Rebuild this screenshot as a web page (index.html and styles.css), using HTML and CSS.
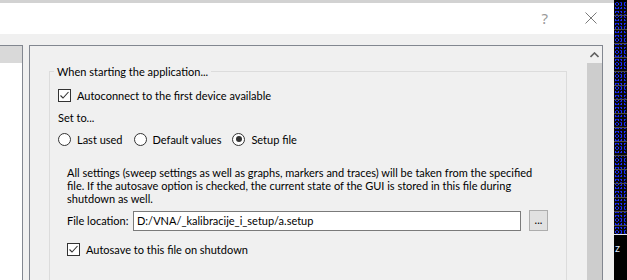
FILE: index.html
```html
<!DOCTYPE html>
<html lang="en">
<head>
    <meta charset="UTF-8">
    <title>Preferences</title>
    <link rel="stylesheet" href="styles.css">
</head>
<body>
    <div class="screen">
        <div class="dialog">
            <div class="titlebar">
                <span class="help">?</span>
                <svg class="close" width="12" height="12" viewBox="0 0 12 12">
                    <path d="M0.5 0.5 L11.5 11.5 M11.5 0.5 L0.5 11.5" stroke="#7a7a7a" stroke-width="1" fill="none"/>
                </svg>
            </div>
            <div class="body">
                <div class="pagelist">
                    <div class="page-item selected"></div>
                </div>
                <div class="scrollarea">
                    <div class="content">
                        <fieldset class="group">
                            <legend>When starting the application...</legend>
                            <label class="row">
                                <span class="check checked">
                                    <svg width="11" height="11" viewBox="0 0 11 11"><path d="M1.5 5.5 L4 8 L9.5 2" stroke="#333" stroke-width="1.1" fill="none"/></svg>
                                </span>
                                Autoconnect to the first device available
                            </label>
                            <div class="row">Set to...</div>
                            <div class="row radios">
                                <label class="radio-opt"><span class="radio"></span>Last used</label>
                                <label class="radio-opt"><span class="radio"></span>Default values</label>
                                <label class="radio-opt"><span class="radio on"></span>Setup file</label>
                            </div>
                            <div class="setup-file">
                                <p class="note">All settings (sweep settings as well as graphs, markers and traces) will be taken from the specified<br>file. If the autosave option is checked, the current state of the GUI is stored in this file during<br>shutdown as well.</p>
                                <div class="file-row">
                                    <span class="file-label">File location:</span>
                                    <span class="file-input">D:/VNA/_kalibracije_i_setup/a.setup</span>
                                    <span class="browse">...</span>
                                </div>
                                <label class="row">
                                    <span class="check checked">
                                        <svg width="11" height="11" viewBox="0 0 11 11"><path d="M1.5 5.5 L4 8 L9.5 2" stroke="#333" stroke-width="1.1" fill="none"/></svg>
                                    </span>
                                    Autosave to this file on shutdown
                                </label>
                            </div>
                        </fieldset>
                    </div>
                    <div class="scrollbar">
                        <div class="arrow">
                            <svg width="9" height="6" viewBox="0 0 9 6"><path d="M0.5 5 L4.5 1 L8.5 5" stroke="#606060" stroke-width="1.6" fill="none"/></svg>
                        </div>
                        <div class="thumb"></div>
                    </div>
                </div>
            </div>
        </div>
        <div class="backdrop">
            <div class="plot"></div>
            <div class="axis">z</div>
        </div>
    </div>
</body>
</html>
```

FILE: styles.css
```css
html, body {
    margin: 0;
    height: 100%;
    overflow: hidden;
}

body {
    font-family: Lato, "Noto Sans", sans-serif;
    font-size: 11px;
    color: #000;
    background: #000;
}

.screen {
    display: flex;
    height: 280px;
}

.dialog {
    width: 614px;
    flex-shrink: 0;
    background: #f0f0f0;
    border-top: 3px solid #d2d2d2;
    display: flex;
    flex-direction: column;
}

.titlebar {
    height: 31px;
    background: #fff;
    display: flex;
    align-items: center;
    justify-content: flex-end;
    padding-right: 17px;
}

.help {
    font-family: "Noto Sans", sans-serif;
    font-size: 15px;
    color: #9a9a9a;
    margin-right: 37px;
    margin-top: -2px;
}

.close {
    margin-top: -1px;
}

.body {
    flex: 1;
    display: flex;
    padding-top: 11px;
    padding-right: 11px;
    min-height: 0;
}

.pagelist {
    width: 22px;
    background: #fff;
    border-top: 1px solid #828790;
    border-right: 1px solid #828790;
}

.page-item {
    height: 17px;
}

.page-item.selected {
    background: #d9d9d9;
}

.scrollarea {
    flex: 1;
    min-width: 0;
    margin-left: 6px;
    border: 1px solid #828790;
    border-bottom: none;
    display: flex;
    overflow: hidden;
}

.content {
    flex: 1;
    min-width: 0;
}

.scrollbar {
    width: 17px;
    flex-shrink: 0;
    display: flex;
    flex-direction: column;
    align-items: flex-end;
}

.arrow {
    width: 16px;
    height: 17px;
    display: flex;
    align-items: center;
    justify-content: center;
}

.thumb {
    width: 15px;
    flex: 1;
    background: #cdcdcd;
}

.group {
    margin: 18px 18px 0 19px;
    padding: 5px 4px 0 4px;
    border: 1px solid #dcdcdc;
    min-height: 300px;
    min-width: 0;
}

.group legend {
    padding: 0 3px;
    line-height: 15px;
}

.row {
    display: flex;
    align-items: center;
    height: 22px;
    padding-left: 4px;
    white-space: nowrap;
}

.check {
    width: 11px;
    height: 11px;
    border: 1px solid #333;
    background: #fff;
    margin-right: 6px;
    display: flex;
    flex-shrink: 0;
}

.radios {
    gap: 11px;
}

.radio-opt {
    display: flex;
    align-items: center;
}

.radio {
    width: 11px;
    height: 11px;
    border: 1px solid #333;
    border-radius: 50%;
    background: #fff;
    margin-right: 6px;
    display: flex;
    align-items: center;
    justify-content: center;
}

.radio.on::after {
    content: "";
    width: 6px;
    height: 6px;
    border-radius: 50%;
    background: #333;
}

.setup-file {
    padding-left: 9px;
}

.note {
    margin: 16px 0 0 4px;
    line-height: 13px;
    white-space: nowrap;
}

.file-row {
    display: flex;
    align-items: center;
    margin: 5px 0 0 4px;
}

.file-label {
    width: 66px;
    flex-shrink: 0;
    white-space: nowrap;
}

.file-input {
    width: 383px;
    height: 18px;
    line-height: 18px;
    padding-left: 3px;
    background: #fff;
    border: 1px solid #7a7a7a;
    flex-shrink: 0;
    white-space: nowrap;
}

.browse {
    width: 17px;
    height: 19px;
    margin-left: 8px;
    background: #e1e1e1;
    border: 1px solid #adadad;
    text-align: center;
    line-height: 17px;
    flex-shrink: 0;
}

.setup-file .row {
    margin-top: 7px;
}

.backdrop {
    flex: 1;
    background: #000;
    overflow: hidden;
}

.plot {
    height: 232px;
    border-bottom: 1px solid #e8e8e8;
    margin-top: 2px;
    background:
        repeating-linear-gradient(to bottom, transparent 0 13px, #4a4a4a 13px 14px),
        radial-gradient(circle, #1f2fff 0.7px, transparent 1px) 0 0 / 3px 4px,
        radial-gradient(circle, #1020c0 0.7px, transparent 1px) 1px 2px / 4px 3px;
    background-color: #0a0a0a;
}

.axis {
    color: #dfe8ff;
    font-size: 11px;
    padding-left: 1px;
    margin-top: 6px;
}
```
